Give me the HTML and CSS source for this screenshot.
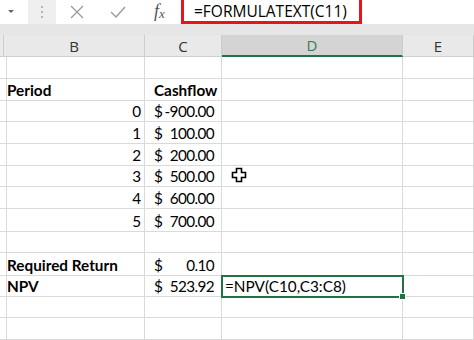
FILE: index.html
```html
<!DOCTYPE html>
<html lang="en">
<head>
    <meta charset="UTF-8">
    <title>NPV worksheet</title>
    <link rel="stylesheet" href="styles.css">
</head>
<body>
    <div class="formula-bar">
        <div class="namebox"><span class="arrow"></span></div>
        <div class="grip"><span></span><span></span><span></span></div>
        <div class="fbtn">
            <svg width="14" height="14" viewBox="0 0 14 14"><path d="M1 1 L13 13 M13 1 L1 13" stroke="#9a9a9a" stroke-width="1.3" fill="none"/></svg>
        </div>
        <div class="fbtn">
            <svg width="16" height="14" viewBox="0 0 16 14"><path d="M1 7 L6 12 L15 2" stroke="#9a9a9a" stroke-width="1.4" fill="none"/></svg>
        </div>
        <div class="fx">f<sub>x</sub></div>
        <div class="formula">=FORMULATEXT(C11)</div>
    </div>
    <div class="band"></div>

    <div class="sheet">
        <div class="hd"></div>
        <div class="hd">B</div>
        <div class="hd">C</div>
        <div class="hd active">D</div>
        <div class="hd">E</div>

        <div class="c"></div><div class="c"></div><div class="c"></div><div class="c"></div><div class="c"></div>

        <div class="c"></div>
        <div class="c b">Period</div>
        <div class="c b lbl">Cashflow</div>
        <div class="c"></div><div class="c"></div>

        <div class="c"></div><div class="c num">0</div><div class="c acc"><span>$</span><span>-900.00</span></div><div class="c"></div><div class="c"></div>
        <div class="c"></div><div class="c num">1</div><div class="c acc"><span>$</span><span>100.00</span></div><div class="c"></div><div class="c"></div>
        <div class="c"></div><div class="c num">2</div><div class="c acc"><span>$</span><span>200.00</span></div><div class="c"></div><div class="c"></div>
        <div class="c"></div><div class="c num">3</div><div class="c acc"><span>$</span><span>500.00</span></div><div class="c"></div><div class="c"></div>
        <div class="c"></div><div class="c num">4</div><div class="c acc"><span>$</span><span>600.00</span></div><div class="c"></div><div class="c"></div>
        <div class="c"></div><div class="c num">5</div><div class="c acc"><span>$</span><span>700.00</span></div><div class="c"></div><div class="c"></div>

        <div class="c"></div><div class="c"></div><div class="c"></div><div class="c"></div><div class="c"></div>

        <div class="c"></div>
        <div class="c b">Required Return</div>
        <div class="c acc"><span>$</span><span>0.10</span></div>
        <div class="c"></div><div class="c"></div>

        <div class="c"></div>
        <div class="c b">NPV</div>
        <div class="c acc"><span>$</span><span>523.92</span></div>
        <div class="c selected">=NPV(C10,C3:C8)<span class="handle"></span></div>
        <div class="c"></div>

        <div class="c"></div><div class="c"></div><div class="c"></div><div class="c"></div><div class="c"></div>
        <div class="c"></div><div class="c"></div><div class="c"></div><div class="c"></div><div class="c"></div>

        <svg class="cursor" width="16" height="16" viewBox="0 0 16 16"><path d="M5.5 1.5 H10.5 V5.5 H14.5 V10.5 H10.5 V14.5 H5.5 V10.5 H1.5 V5.5 H5.5 Z" fill="#fff" stroke="#000" stroke-width="1.6"/></svg>
    </div>
</body>
</html>
```

FILE: styles.css
```css
body {
    margin: 0;
    width: 474px;
    height: 340px;
    overflow: hidden;
    font-family: Lato, "Open Sans", sans-serif;
    background: #fff;
    color: #000;
}
.formula-bar {
    display: flex;
    height: 24px;
    background: #fff;
}
.namebox {
    width: 28px;
    position: relative;
    background: #fff;
}
.namebox .arrow {
    position: absolute;
    left: 8px;
    top: 10px;
    border-left: 3px solid transparent;
    border-right: 3px solid transparent;
    border-top: 3px solid #666;
}
.grip {
    width: 28px;
    background: #efefef;
    display: flex;
    flex-direction: column;
    align-items: center;
    justify-content: center;
    gap: 3px;
}
.grip span {
    width: 2px;
    height: 2px;
    background: #b5b5b5;
}
.fbtn {
    width: 41px;
    display: flex;
    align-items: center;
    justify-content: center;
}
.fx {
    width: 43px;
    font-family: "Liberation Serif", serif;
    font-style: italic;
    font-size: 18px;
    color: #555;
    text-align: center;
    line-height: 22px;
}
.fx sub {
    font-size: 13px;
    vertical-align: -1px;
}
.formula {
    width: 165px;
    height: 21px;
    border: 3px solid #e8141b;
    border-top-width: 1px;
    margin-top: -1px;
    font-family: "Open Sans", sans-serif;
    font-size: 15.5px;
    line-height: 22px;
    padding-left: 10px;
    box-sizing: content-box;
}
.band {
    height: 11px;
    background: #e6e6e6;
}
.sheet {
    position: relative;
    display: grid;
    grid-template-columns: 4px 141px 77px 181px 71px;
    grid-template-rows: 22px 22px 22px 21px 22px 22px 21px 22px 23px 21px 23px 21px 21px 22px;
    font-size: 15.3px;
}
.hd {
    background: #e9e9e9;
    border-right: 1px solid #cdcdcd;
    border-bottom: 1px solid #d0d0d0;
    display: flex;
    align-items: center;
    justify-content: center;
    font-family: "Open Sans", sans-serif;
    font-size: 15px;
    color: #333;
}
.hd.active {
    background: #d4d4d4;
    color: #3a7a56;
    border-bottom: 2px solid #217346;
}
.c {
    border-right: 1px solid #dadada;
    border-bottom: 1px solid #dadada;
    display: flex;
    align-items: flex-end;
    padding: 0 3px 1px;
    white-space: nowrap;
    overflow: visible;
    line-height: 18px;
}
.b {
    font-weight: bold;
}
.lbl {
    padding-left: 9px;
}
.num {
    justify-content: flex-end;
}
.acc {
    justify-content: space-between;
    padding: 0 7px 1px 9px;
    letter-spacing: -0.6px;
}
.selected {
    position: relative;
    outline: 2px solid #217346;
    outline-offset: -1px;
    z-index: 1;
}
.handle {
    position: absolute;
    right: -4px;
    bottom: -4px;
    width: 5px;
    height: 5px;
    background: #217346;
    border: 1px solid #fff;
}
.cursor {
    position: absolute;
    left: 231px;
    top: 132px;
}
```
